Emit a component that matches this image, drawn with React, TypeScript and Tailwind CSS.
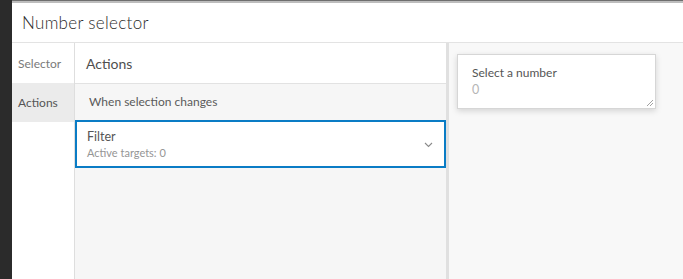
import React from "react";

export default function App() {
  return (
    <div
      className="flex h-[279px] w-[683px] overflow-hidden bg-[#2b2b2b]"
      style={{ fontFamily: 'Lato, "Noto Sans", sans-serif' }}
    >
      <div className="w-[12px] shrink-0 bg-[#2b2b2b]" />
      <div className="flex min-w-0 flex-1 flex-col">
        <div className="h-[1px] bg-[#6e6e6e]" />
        <div className="h-[2px] bg-[#bdbdbd]" />
        <div className="flex h-[40px] shrink-0 items-center border-b border-[#e3e3e3] bg-white pl-[10px] text-[17px] font-light tracking-[0.3px] text-[#2a2a2a]">
          Number selector
        </div>
        <div className="flex min-h-0 flex-1">
          <div className="flex w-[63px] shrink-0 flex-col border-r border-[#dedede] bg-white pt-[1px]">
            <div className="flex h-[39px] items-center pl-[6px] text-[12px] text-[#7a7a7a]">
              Selector
            </div>
            <div className="flex h-[39px] items-center bg-[#ebebeb] pl-[6px] text-[12px] text-[#555]">
              Actions
            </div>
          </div>
          <div className="flex w-[371px] shrink-0 flex-col bg-[#f6f6f6]">
            <div className="flex h-[41px] shrink-0 items-center border-b border-[#e2e2e2] bg-white pl-[11px] text-[14px] text-[#4f4f4f]">
              Actions
            </div>
            <div className="flex h-[36px] shrink-0 items-center pl-[14px] text-[12px] text-[#5a5a5a]">
              When selection changes
            </div>
            <div className="flex h-[48px] shrink-0 items-center justify-between border-2 border-[#0a7cc5] bg-white pl-[10px] pr-[11px]">
              <div className="flex flex-col">
                <span className="text-[12.5px] leading-[16px] text-[#555]">Filter</span>
                <span className="text-[11px] leading-[15px] text-[#959595]">Active targets: 0</span>
              </div>
              <svg width="9" height="6" viewBox="0 0 9 6" className="mt-[2px]">
                <path d="M1 1 L4.5 4.5 L8 1" fill="none" stroke="#8a8a8a" strokeWidth="1.1" />
              </svg>
            </div>
          </div>
          <div className="w-[3px] shrink-0 bg-[#e0e0e0]" />
          <div className="flex-1 bg-[#f8f8f8] pl-[8px] pt-[11px]">
            <div className="relative h-[55px] w-[199px] border border-[#d6d6d6] bg-white pl-[14px] pt-[10px] shadow-[0_2px_6px_rgba(0,0,0,0.15)]">
              <div className="text-[12px] leading-[16px] text-[#555]">Select a number</div>
              <div className="mt-[1px] text-[12.5px] leading-[16px] text-[#b5b5b5]">0</div>
              <svg width="8" height="8" viewBox="0 0 8 8" className="absolute bottom-[1px] right-[1px]">
                <path d="M7 1 L1 7 M7 4 L4 7" stroke="#8a8a8a" strokeWidth="0.8" />
              </svg>
            </div>
          </div>
        </div>
      </div>
    </div>
  );
}
